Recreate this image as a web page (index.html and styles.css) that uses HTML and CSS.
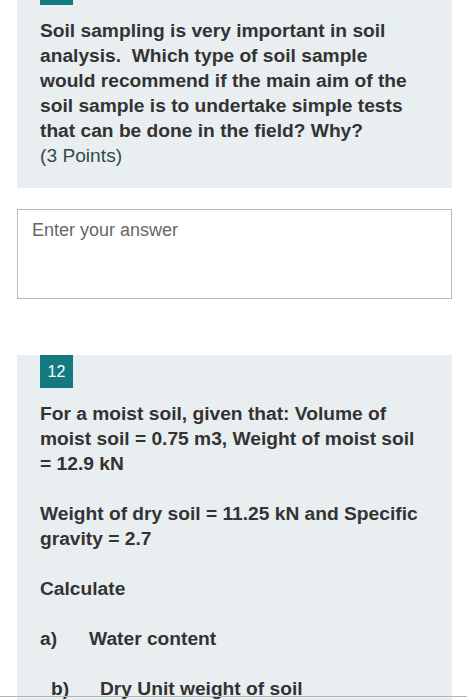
FILE: index.html
```html
<!DOCTYPE html>
<html>
<head>
<meta charset="utf-8">
<link rel="stylesheet" href="styles.css">
</head>
<body>
<div class="page">
  <section class="card first">
    <div class="badge"></div>
    <p class="q">Soil sampling is very important in soil analysis.&nbsp; Which type of soil sample would recommend if the main aim of the soil sample is to undertake simple tests that can be done in the field? Why?</p>
    <p class="points">(3 Points)</p>
  </section>
  <div class="answer">Enter your answer</div>
  <section class="card second">
    <div class="badge">12</div>
    <p class="q">For a moist soil, given that: Volume of moist soil = 0.75 m3, Weight of moist soil = 12.9 kN</p>
    <p class="q gap">Weight of dry soil = 11.25 kN and Specific gravity = 2.7</p>
    <p class="q gap">Calculate</p>
    <p class="q gap item"><span class="lbl">a)</span>Water content</p>
    <p class="q gap item b"><span class="lbl">b)</span>Dry Unit weight of soil</p>
  </section>
</div>
<div class="edge"></div>
</body>
</html>
```
FILE: styles.css
```css
html, body {
  margin: 0;
  padding: 0;
  background: #fff;
  overflow: hidden;
}
body {
  font-family: "Liberation Sans", Arial, sans-serif;
  color: #333;
}
.page {
  display: flex;
  flex-direction: column;
  padding: 0 17px;
  margin-top: -28px;
}
.card {
  background: #e9eff1;
  padding: 0 32px 20px 23px;
  display: flex;
  flex-direction: column;
  align-items: flex-start;
}
.badge {
  width: 33px;
  height: 33px;
  background: #137b7f;
  color: #fff;
  font-size: 16px;
  display: flex;
  align-items: center;
  justify-content: center;
  margin-bottom: 13px;
}
.q {
  margin: 0;
  font-weight: bold;
  font-size: 19.2px;
  line-height: 25px;
}
.points {
  margin: 0;
  font-size: 19.2px;
  line-height: 25px;
  color: #2f4a4c;
}
.answer {
  margin-top: 21px;
  height: 88px;
  border: 1px solid #b9b9b9;
  box-sizing: content-box;
  padding: 0 14px;
  font-size: 18px;
  line-height: 40px;
  color: #666;
}
.second {
  margin-top: 56px;
  height: 400px;
}
.gap {
  margin-top: 25px;
}
.item {
  display: flex;
}
.lbl {
  width: 49px;
}
.b {
  padding-left: 11px;
}
.edge {
  position: fixed;
  left: 0;
  right: 2px;
  bottom: 3px;
  height: 1px;
  background: #b5b5b5;
}
```
